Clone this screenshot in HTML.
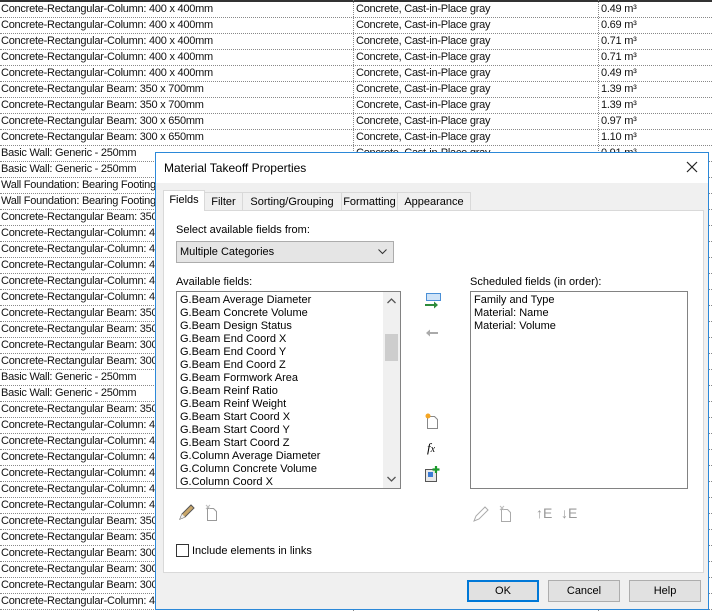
<!DOCTYPE html>
<html><head><meta charset="utf-8">
<style>
*{box-sizing:border-box;margin:0;padding:0}
body{width:712px;height:611px;overflow:hidden;background:#fff;font-family:"Liberation Sans",Arial,sans-serif;position:relative}
#tbl{position:absolute;left:0;top:0;width:712px;border-top:2px solid #333}
.r{height:16px;border-bottom:1px dotted #888;font-size:11px;letter-spacing:-0.25px;color:#111;line-height:15px;position:relative;white-space:nowrap}
.r span{position:absolute;top:0}
.c1{left:1px}.c2{left:356px}.c3{left:601px}
.v1{position:absolute;top:0;left:353px;height:611px;border-left:1px dotted #888}
.v2{position:absolute;top:0;left:598px;height:611px;border-left:1px dotted #888}
#dlg{position:absolute;left:155px;top:152px;width:554px;height:458px;background:#f0f0f0;border:1px solid #2b88d8;font-size:11px;color:#000}
#title{position:absolute;left:0;top:0;width:100%;height:30px;background:#fff}
#title .t{position:absolute;left:8px;top:8px;font-size:12px}
.tab{position:absolute;top:39px;height:19px;border:1px solid #d9d9d9;border-bottom:none;background:#f0f0f0;padding:3px 0 0;text-align:center;font-size:11px;white-space:nowrap}
#panel{position:absolute;left:7px;top:57px;width:541px;height:363px;background:#fff;border:1px solid #d9d9d9}
.abs{position:absolute}
.list{position:absolute;background:#fff;border:1px solid #828282}
.list div{height:13px;line-height:13px;padding-left:3px;font-size:11px}
.btn{position:absolute;top:427px;height:22px;background:#e1e1e1;border:1px solid #adadad;text-align:center;line-height:20px;font-size:11px}
</style></head><body>
<div id="tbl">
<div class="r"><span class="c1">Concrete-Rectangular-Column: 400 x 400mm</span><span class="c2">Concrete, Cast-in-Place gray</span><span class="c3">0.49 m³</span></div>
<div class="r"><span class="c1">Concrete-Rectangular-Column: 400 x 400mm</span><span class="c2">Concrete, Cast-in-Place gray</span><span class="c3">0.69 m³</span></div>
<div class="r"><span class="c1">Concrete-Rectangular-Column: 400 x 400mm</span><span class="c2">Concrete, Cast-in-Place gray</span><span class="c3">0.71 m³</span></div>
<div class="r"><span class="c1">Concrete-Rectangular-Column: 400 x 400mm</span><span class="c2">Concrete, Cast-in-Place gray</span><span class="c3">0.71 m³</span></div>
<div class="r"><span class="c1">Concrete-Rectangular-Column: 400 x 400mm</span><span class="c2">Concrete, Cast-in-Place gray</span><span class="c3">0.49 m³</span></div>
<div class="r"><span class="c1">Concrete-Rectangular Beam: 350 x 700mm</span><span class="c2">Concrete, Cast-in-Place gray</span><span class="c3">1.39 m³</span></div>
<div class="r"><span class="c1">Concrete-Rectangular Beam: 350 x 700mm</span><span class="c2">Concrete, Cast-in-Place gray</span><span class="c3">1.39 m³</span></div>
<div class="r"><span class="c1">Concrete-Rectangular Beam: 300 x 650mm</span><span class="c2">Concrete, Cast-in-Place gray</span><span class="c3">0.97 m³</span></div>
<div class="r"><span class="c1">Concrete-Rectangular Beam: 300 x 650mm</span><span class="c2">Concrete, Cast-in-Place gray</span><span class="c3">1.10 m³</span></div>
<div class="r"><span class="c1">Basic Wall: Generic - 250mm</span><span class="c2">Concrete, Cast-in-Place gray</span><span class="c3">0.91 m³</span></div>
<div class="r"><span class="c1">Basic Wall: Generic - 250mm</span></div>
<div class="r"><span class="c1">Wall Foundation: Bearing Footing</span></div>
<div class="r"><span class="c1">Wall Foundation: Bearing Footing</span></div>
<div class="r"><span class="c1">Concrete-Rectangular Beam: 350</span></div>
<div class="r"><span class="c1">Concrete-Rectangular-Column: 400</span></div>
<div class="r"><span class="c1">Concrete-Rectangular-Column: 400</span></div>
<div class="r"><span class="c1">Concrete-Rectangular-Column: 400</span></div>
<div class="r"><span class="c1">Concrete-Rectangular-Column: 400</span></div>
<div class="r"><span class="c1">Concrete-Rectangular-Column: 400</span></div>
<div class="r"><span class="c1">Concrete-Rectangular Beam: 350</span></div>
<div class="r"><span class="c1">Concrete-Rectangular Beam: 350</span></div>
<div class="r"><span class="c1">Concrete-Rectangular Beam: 300</span></div>
<div class="r"><span class="c1">Concrete-Rectangular Beam: 300</span></div>
<div class="r"><span class="c1">Basic Wall: Generic - 250mm</span></div>
<div class="r"><span class="c1">Basic Wall: Generic - 250mm</span></div>
<div class="r"><span class="c1">Concrete-Rectangular Beam: 350</span></div>
<div class="r"><span class="c1">Concrete-Rectangular-Column: 400</span></div>
<div class="r"><span class="c1">Concrete-Rectangular-Column: 400</span></div>
<div class="r"><span class="c1">Concrete-Rectangular-Column: 400</span></div>
<div class="r"><span class="c1">Concrete-Rectangular-Column: 400</span></div>
<div class="r"><span class="c1">Concrete-Rectangular-Column: 400</span></div>
<div class="r"><span class="c1">Concrete-Rectangular-Column: 400</span></div>
<div class="r"><span class="c1">Concrete-Rectangular Beam: 350</span></div>
<div class="r"><span class="c1">Concrete-Rectangular Beam: 350</span></div>
<div class="r"><span class="c1">Concrete-Rectangular Beam: 300</span></div>
<div class="r"><span class="c1">Concrete-Rectangular Beam: 300</span></div>
<div class="r"><span class="c1">Concrete-Rectangular Beam: 300</span></div>
<div class="r"><span class="c1">Concrete-Rectangular-Column: 400</span></div>
</div>
<div class="v1"></div><div class="v2"></div>

<div id="dlg">
<div id="title"><span class="t">Material Takeoff Properties</span>
<svg class="abs" style="right:10px;top:8px" width="12" height="12"><path d="M1 1L11 11M11 1L1 11" stroke="#222" stroke-width="1.2"/></svg></div>
<div class="tab" style="left:48px;width:39px">Filter</div>
<div class="tab" style="left:86px;width:100px">Sorting/Grouping</div>
<div class="tab" style="left:185px;width:57px">Formatting</div>
<div class="tab" style="left:241px;width:74px">Appearance</div>
<div id="panel"></div>
<div class="tab" style="left:7px;top:37px;width:42px;height:21px;background:#fff;z-index:2;padding-top:3px">Fields</div>

<div class="abs" style="left:20px;top:71px">Select available fields from:</div>
<div class="abs" style="left:20px;top:88px;width:218px;height:22px;background:#e5e5e5;border:1px solid #acacac;padding:4px 0 0 3px">Multiple Categories
<svg class="abs" style="right:6px;top:7px" width="9" height="6"><path d="M0.5 0.5L4.5 4.5L8.5 0.5" stroke="#333" fill="none"/></svg></div>

<div class="abs" style="left:20px;top:123px">Available fields:</div>
<div class="abs" style="left:314px;top:123px">Scheduled fields (in order):</div>

<div class="list" style="left:20px;top:138px;width:225px;height:198px;padding-top:2px">
<div>G.Beam Average Diameter</div><div>G.Beam Concrete Volume</div><div>G.Beam Design Status</div><div>G.Beam End Coord X</div><div>G.Beam End Coord Y</div><div>G.Beam End Coord Z</div><div>G.Beam Formwork Area</div><div>G.Beam Reinf Ratio</div><div>G.Beam Reinf Weight</div><div>G.Beam Start Coord X</div><div>G.Beam Start Coord Y</div><div>G.Beam Start Coord Z</div><div>G.Column Average Diameter</div><div>G.Column Concrete Volume</div><div>G.Column Coord X</div>
<span class="abs" style="right:0;top:0;width:17px;height:196px;background:#f0f0f0"></span>
<span class="abs" style="right:2px;top:42px;width:13px;height:27px;background:#cdcdcd"></span>
<svg class="abs" style="right:4px;top:6px" width="9" height="6"><path d="M0.5 5L4.5 1L8.5 5" stroke="#555" fill="none" stroke-width="1.3"/></svg>
<svg class="abs" style="right:4px;bottom:6px" width="9" height="6"><path d="M0.5 1L4.5 5L8.5 1" stroke="#555" fill="none" stroke-width="1.3"/></svg>
</div>

<div class="list" style="left:314px;top:138px;width:218px;height:198px;padding-top:2px">
<div>Family and Type</div><div>Material: Name</div><div>Material: Volume</div>
</div>

<svg class="abs" style="left:268px;top:140px" width="20" height="16"><rect x="2.5" y="0.5" width="14" height="7" fill="#cfe3f7" stroke="#4a8fd6"/><path d="M1 12H13" stroke="#2e8b3a" stroke-width="2"/><path d="M10 8.5L14 12L10 15.5Z" fill="#2e8b3a"/></svg>
<svg class="abs" style="left:268px;top:175px" width="16" height="10"><path d="M3 5H14" stroke="#aaa" stroke-width="2"/><path d="M6 1.5L2 5L6 8.5Z" fill="#aaa"/></svg>
<svg class="abs" style="left:268px;top:259px" width="16" height="18"><path d="M3.5 4.5H10.5L13.5 7.5V16.5H3.5Z" fill="#fff" stroke="#888"/><circle cx="4" cy="4" r="2.5" fill="#f5a623"/></svg>
<div class="abs" style="left:271px;top:287px;font-family:'Liberation Serif',serif;font-style:italic;font-size:13px">f<span style="font-size:10px">x</span></div>
<svg class="abs" style="left:268px;top:312px" width="16" height="18"><rect x="1.5" y="4.5" width="11" height="12" fill="#e8e8e8" stroke="#555"/><rect x="4" y="7" width="5" height="5" fill="#3b7bd4"/><path d="M12 1V8M8.5 4.5H15.5" stroke="#1a9a2a" stroke-width="2.2"/></svg>

<svg class="abs" style="left:22px;top:350px" width="18" height="18"><path d="M2 16L4 11L13 2L16 5L7 14Z" fill="#c9a76b" stroke="#555"/><path d="M2 16L4 11L7 14Z" fill="#eee"/></svg>
<svg class="abs" style="left:48px;top:351px" width="16" height="18"><path d="M3.5 4.5H9.5L12.5 7.5V16.5H3.5Z" fill="#fff" stroke="#999"/><path d="M2 1L6 5M6 1L2 5" stroke="#bbb"/></svg>
<svg class="abs" style="left:316px;top:352px" width="18" height="18"><path d="M2 16L4 11L13 2L16 5L7 14Z" fill="#fff" stroke="#aaa"/></svg>
<svg class="abs" style="left:342px;top:352px" width="16" height="18"><path d="M3.5 4.5H9.5L12.5 7.5V16.5H3.5Z" fill="#fff" stroke="#aaa"/><path d="M2 1L6 5M6 1L2 5" stroke="#bbb"/></svg>
<div class="abs" style="left:380px;top:352px;color:#999;font-size:14px">↑E</div>
<div class="abs" style="left:405px;top:352px;color:#999;font-size:14px">↓E</div>

<div class="abs" style="left:20px;top:391px;width:13px;height:13px;border:1px solid #333;background:#fff"></div>
<div class="abs" style="left:36px;top:392px">Include elements in links</div>

<div class="btn" style="left:311px;width:72px;border:2px solid #0078d7;line-height:18px">OK</div>
<div class="btn" style="left:392px;width:72px">Cancel</div>
<div class="btn" style="left:473px;width:72px">Help</div>
</div>
</body></html>
